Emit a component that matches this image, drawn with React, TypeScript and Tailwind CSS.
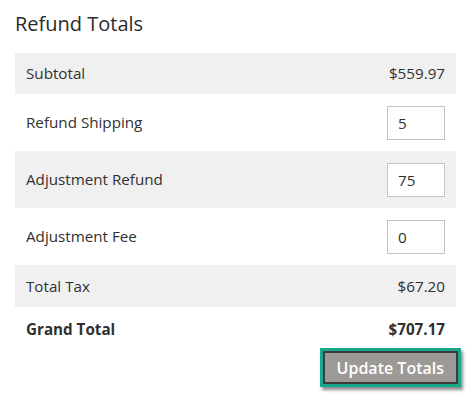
import React from "react";

type Row = {
  label: string;
  value?: string;
  input?: string;
  shaded?: boolean;
};

const rows: Row[] = [
  { label: "Subtotal", value: "$559.97", shaded: true },
  { label: "Refund Shipping", input: "5" },
  { label: "Adjustment Refund", input: "75", shaded: true },
  { label: "Adjustment Fee", input: "0" },
  { label: "Total Tax", value: "$67.20", shaded: true },
];

export default function App() {
  return (
    <div
      className="w-[474px] h-[406px] bg-white px-[15px] pt-[10px] text-[#303030]"
      style={{ fontFamily: '"Open Sans", "Liberation Sans", sans-serif' }}
    >
      <h2 className="text-[20px] leading-[27px] font-normal text-[#2b2b2b]">Refund Totals</h2>

      <div className="mt-[16px] w-[441px]">
        {rows.map((r, i) => (
          <div
            key={r.label}
            className={`flex items-center justify-between px-[11px] text-[15.2px] ${
              r.shaded ? "bg-[#f0f0f0]" : "bg-white"
            } ${r.input ? "h-[57px]" : i === 0 ? "h-[41px]" : "h-[42px]"}`}
          >
            <span>{r.label}</span>
            {r.input ? (
              <input
                readOnly
                value={r.input}
                className="h-[34px] w-[58px] border border-[#c2c2c2] bg-white px-[10px] text-[15.2px] text-[#303030] outline-none"
              />
            ) : (
              <span>{r.value}</span>
            )}
          </div>
        ))}
        <div className="flex h-[44px] items-center justify-between px-[11px] text-[15.2px] font-bold">
          <span>Grand Total</span>
          <span>$707.17</span>
        </div>
      </div>

      <div className="mt-[-3px] flex w-[446px] justify-end">
        <div className="border-[3px] border-[#1aa88d] shadow-[2px_3px_3px_rgba(0,0,0,0.45)]">
          <button className="h-[33px] border-2 border-[#3b3b3b] bg-[#9c9997] px-[12px] text-[16px] font-semibold text-white">
            Update Totals
          </button>
        </div>
      </div>
    </div>
  );
}
